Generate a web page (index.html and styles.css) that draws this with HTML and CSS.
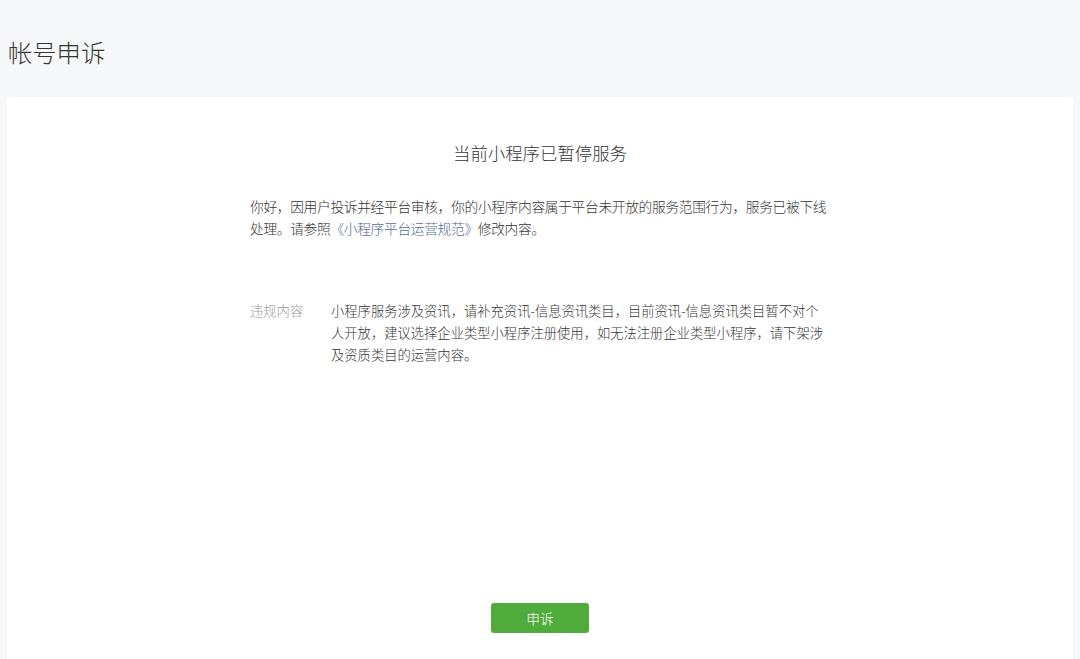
FILE: index.html
```html
<!DOCTYPE html>
<html lang="zh-CN">
<head>
<meta charset="utf-8">
<title>帐号申诉</title>
<link rel="stylesheet" href="styles.css">
</head>
<body>
<header class="page-header">
  <h1 class="page-title">帐号申诉</h1>
</header>
<main class="card">
  <div class="content">
    <h2 class="notice-title">当前小程序已暂停服务</h2>
    <p class="notice-text">你好，因用户投诉并经平台审核，你的小程序内容属于平台未开放的服务范围行为，服务已被下线处理。请参照<a class="link" href="#">《小程序平台运营规范》</a>修改内容。</p>
    <div class="detail-row">
      <div class="detail-label">违规内容</div>
      <div class="detail-value">小程序服务涉及资讯，请补充资讯-信息资讯类目，目前资讯-信息资讯类目暂不对个人开放，建议选择企业类型小程序注册使用，如无法注册企业类型小程序，请下架涉及资质类目的运营内容。</div>
    </div>
  </div>
  <div class="actions">
    <button class="btn-primary" type="button">申诉</button>
  </div>
</main>
</body>
</html>
```

FILE: styles.css
```css
html, body {
  margin: 0;
  padding: 0;
  background: #f6f7f9;
  font-family: "Noto Sans CJK SC", "Noto Sans", sans-serif;
  color: #353535;
  overflow: hidden;
}

.page-header {
  padding: 36px 8px 0;
  margin-bottom: 29px;
}

.page-title {
  margin: 0;
  font-size: 24.3px;
  line-height: 32px;
  font-weight: 300;
  color: #353535;
}

.card {
  margin: 0 7px;
  background: #fff;
  border-radius: 4px 4px 0 0;
  min-height: 600px;
  padding-top: 44px;
  box-sizing: border-box;
}

.content {
  width: 580px;
  margin: 0 auto;
}

.notice-title {
  margin: 0;
  text-align: center;
  font-size: 17.4px;
  line-height: 24px;
  font-weight: 300;
  color: #353535;
}

.notice-text {
  margin: 30px -4px 0 0;
  font-size: 13.75px;
  line-height: 22px;
  letter-spacing: -0.35px;
  font-weight: 300;
}

.link {
  color: #576b95;
  text-decoration: none;
}

.detail-row {
  display: flex;
  margin-top: 61px;
  font-size: 13.3px;
  line-height: 22px;
  font-weight: 300;
}

.detail-label {
  flex: 0 0 81px;
  color: #9a9a9a;
}

.detail-value {
  flex: 0 1 492px;
}

.actions {
  display: flex;
  justify-content: center;
  margin-top: 237px;
}

.btn-primary {
  width: 98px;
  height: 30px;
  border: 0;
  border-radius: 3px;
  background: #4fab3a;
  color: #fff;
  font-family: "Noto Sans CJK SC", "Noto Sans", sans-serif;
  font-size: 13.75px;
  font-weight: 300;
  padding: 0;
  cursor: pointer;
}
```
